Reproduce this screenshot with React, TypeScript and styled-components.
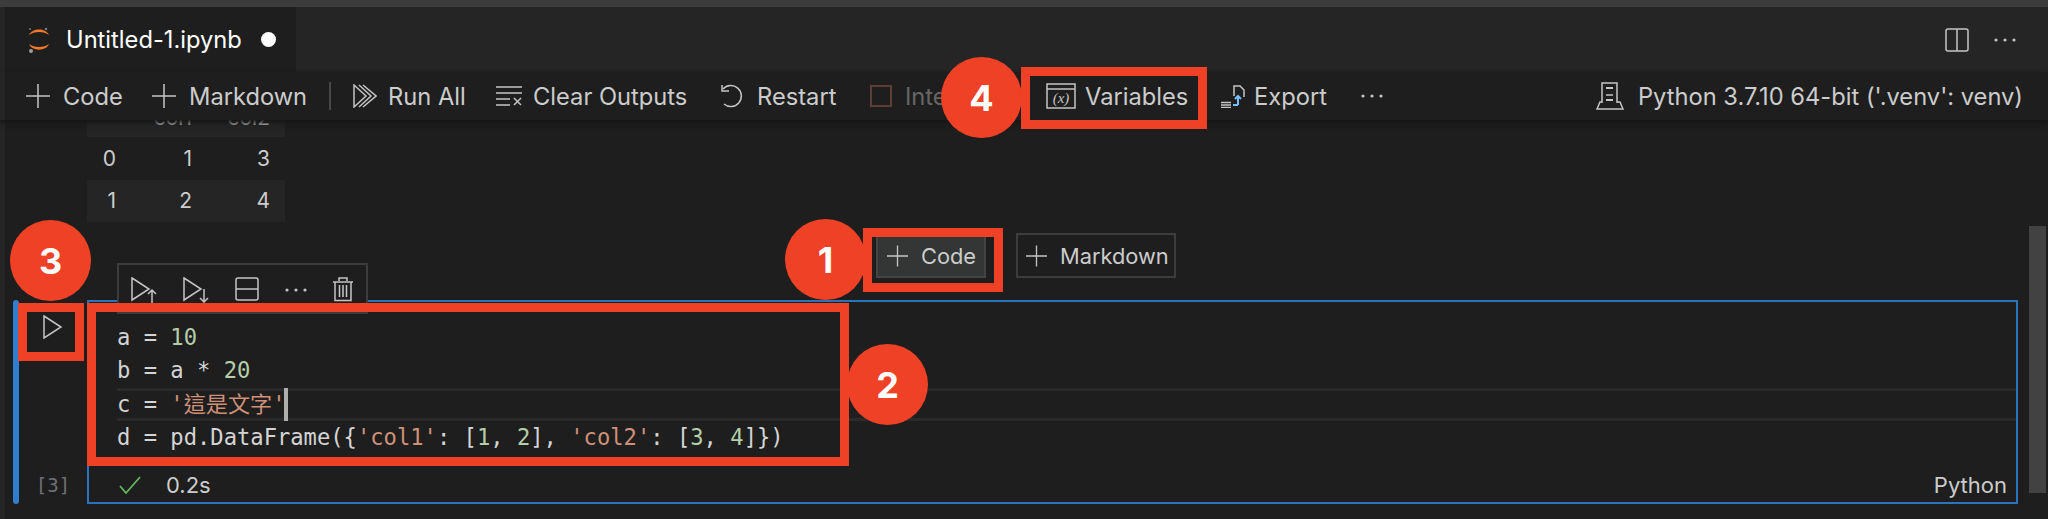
import styled, { createGlobalStyle } from "styled-components";

const GlobalStyle = createGlobalStyle`
  html, body {
    margin: 0;
    padding: 0;
    background: #1e1e1e;
  }
`;

const UI_FONT = `Inter, "Liberation Sans", sans-serif`;
const MONO_FONT = `"DejaVu Sans Mono", "Liberation Mono", "Noto Sans CJK TC", monospace`;

function Icon({ w, h, children }: { w: number; h: number; children: React.ReactNode }) {
  return (
    <Svg width={w} height={h} viewBox={`0 0 ${w} ${h}`}>
      {children}
    </Svg>
  );
}

const PlusIcon = () => (
  <Icon w={24} h={26}>
    <path d="M12 1v24M0 13h24" />
  </Icon>
);

const RunAllIcon = () => (
  <Icon w={24} h={24}>
    <path d="M1 1l12 11L1 23z" />
    <path d="M6 1l12 11L6 23M10 1l13 11-13 11" />
  </Icon>
);

const ClearIcon = () => (
  <Icon w={26} h={20}>
    <path d="M0 1h26M0 7h26M0 13h14M0 19h14" />
    <path d="M18 12l7 7M25 12l-7 7" />
  </Icon>
);

const RestartIcon = () => (
  <Icon w={25} h={24}>
    <path d="M5 20a10.5 10.5 0 1 0 -1-15" />
    <path d="M3 1v6h7" />
  </Icon>
);

const VariablesIcon = () => (
  <Icon w={30} h={26}>
    <rect x="1" y="1" width="28" height="24" />
    <path d="M1 6h28" />
    <VarText x="15" y="20">
      (x)
    </VarText>
  </Icon>
);

const ExportIcon = () => (
  <Icon w={24} h={23}>
    <path d="M0 17.500h10M0 20h10M0 22.500h10" />
    <path d="M13 11V1h6l4 4v7" />
    <BluePath d="M17 20v-9M14 14l3-3 3 3M12 20h5" />
  </Icon>
);

const KernelIcon = () => (
  <Icon w={28} h={28}>
    <path d="M6 21V1h15v20" />
    <path d="M10 6h7M10 18h7" strokeWidth="2" />
    <path d="M10 13h7" />
    <path d="M6 20H4l-3 7h26l-3-7h-3M1 27h26" />
  </Icon>
);

const SplitIcon = () => (
  <Icon w={24} h={24}>
    <rect x="1" y="1" width="22" height="22" rx="2" />
    <path d="M12 1v22" />
  </Icon>
);

const DotsIcon = () => (
  <Icon w={24} h={6}>
    <Dot cx="3" cy="3" r="1.6" />
    <Dot cx="12" cy="3" r="1.6" />
    <Dot cx="21" cy="3" r="1.6" />
  </Icon>
);

const RunUpIcon = () => (
  <Icon w={27} h={26}>
    <path d="M1 1l17 11L1 23z" />
    <path d="M21 26V13M17 17l4-4 4 4" />
  </Icon>
);

const RunDownIcon = () => (
  <Icon w={27} h={26}>
    <path d="M1 1l17 11L1 23z" />
    <path d="M21 12v13M17 21l4 4 4-4" />
  </Icon>
);

const SplitCellIcon = () => (
  <Icon w={24} h={24}>
    <rect x="1" y="1" width="22" height="22" rx="2" />
    <path d="M1 12h22" />
  </Icon>
);

const TrashIcon = () => (
  <Icon w={20} h={25}>
    <path d="M0 5h20M6 4V1h8v3" />
    <path d="M2 5v18.500h16V5" />
    <path d="M6.500 8v12M10 8v12M13.500 8v12" />
  </Icon>
);

const RunIcon = () => (
  <Icon w={20} h={24}>
    <path d="M1 1l17 11L1 23z" />
  </Icon>
);

const CheckIcon = () => (
  <Icon w={22} h={18}>
    <GreenPath d="M1 10l6 7L21 1" />
  </Icon>
);

const JupyterIcon = () => (
  <JupyterSvg width={24} height={26} viewBox="0 0 24 26">
    <path d="M1 8C4 .5 18 .5 21 8 16 4 6 4 1 8z" fill="#f37726" />
    <path d="M1 17C6 21 16 21 21 17 18 24.500 4 24.500 1 17z" fill="#f37726" />
    <circle cx="18" cy="2" r="1.300" fill="#767677" />
    <circle cx="2" cy="2" r="1" fill="#767677" />
    <circle cx="3" cy="24" r="2" fill="#9e9e9e" />
  </JupyterSvg>
);

const DATAFRAME_PIECES = [
  ["d = pd.DataFrame({", ""],
  ["'col1'", "str"],
  [": [", ""],
  ["1", "num"],
  [", ", ""],
  ["2", "num"],
  ["], ", ""],
  ["'col2'", "str"],
  [": [", ""],
  ["3", "num"],
  [", ", ""],
  ["4", "num"],
  ["]})", ""],
];

export default function App() {
  return (
    <Page>
      <GlobalStyle />
      <TopStrip />
      <TabBar>
        <Tab>
          <JupyterIcon />
          <TabName>Untitled-1.ipynb</TabName>
          <DirtyDot />
        </Tab>
        <TabActions>
          <SplitIcon />
          <DotsIcon />
        </TabActions>
      </TabBar>
      <Toolbar>
        <ToolItem $w={96}>
          <PlusIcon />
          Code
        </ToolItem>
        <ToolItem $w={153}>
          <PlusIcon />
          Markdown
        </ToolItem>
        <ToolDivider />
        <ToolItem $w={113} $gap={11}>
          <RunAllIcon />
          Run All
        </ToolItem>
        <ToolItem $w={193} $gap={11}>
          <ClearIcon />
          Clear Outputs
        </ToolItem>
        <ToolItem $w={121}>
          <RestartIcon />
          Restart
        </ToolItem>
        <ToolItem $w={146} $dim>
          <StopBox />
          Interrupt
        </ToolItem>
        <ToolItem $w={145} $gap={9}>
          <VariablesIcon />
          Variables
        </ToolItem>
        <ToolItem $w={109} $gap={9}>
          <ExportIcon />
          Export
        </ToolItem>
        <DotsIcon />
        <KernelPicker>
          <KernelIcon />
          Python 3.7.10 64-bit ('.venv': venv)
        </KernelPicker>
      </Toolbar>
      <Content>
        <OutputTable>
          <HeadCell />
          <HeadCell>col1</HeadCell>
          <HeadCell>col2</HeadCell>
          <BodyCell>0</BodyCell>
          <BodyCell>1</BodyCell>
          <BodyCell>3</BodyCell>
          <BodyCell $stripe>1</BodyCell>
          <BodyCell $stripe>2</BodyCell>
          <BodyCell $stripe>4</BodyCell>
        </OutputTable>
        <InsertRow>
          <InsertButton $active $w={110}>
            <PlusSmall>
              <PlusIcon />
            </PlusSmall>
            Code
          </InsertButton>
          <InsertButton $w={160}>
            <PlusSmall>
              <PlusIcon />
            </PlusSmall>
            Markdown
          </InsertButton>
        </InsertRow>
        <Cell>
          <FocusBar />
          <Gutter>
            <RunIcon />
            <ExecCount>[3]</ExecCount>
          </Gutter>
          <Editor>
            <CellToolbar>
              <RunUpIcon />
              <RunDownIcon />
              <SplitCellIcon />
              <DotsIcon />
              <TrashIcon />
            </CellToolbar>
            <Code>
              <Line>
                a = <Num>10</Num>
              </Line>
              <Line>
                b = a * <Num>20</Num>
              </Line>
              <Line $current>
                c = <Str>'這是文字'</Str>
                <Caret />
              </Line>
              <Line>
                {DATAFRAME_PIECES.map(([text, kind], i) =>
                  kind === "str" ? (
                    <Str key={i}>{text}</Str>
                  ) : kind === "num" ? (
                    <Num key={i}>{text}</Num>
                  ) : (
                    <span key={i}>{text}</span>
                  )
                )}
              </Line>
            </Code>
            <CellStatus>
              <CheckIcon />
              <Duration>0.2s</Duration>
              <Language>Python</Language>
            </CellStatus>
          </Editor>
        </Cell>
        <ScrollThumb />
      </Content>

      <RedBox $x={863} $y={228} $w={140} $h={64} />
      <RedBox $x={87} $y={303} $w={762} $h={163} />
      <RedBox $x={18} $y={303} $w={66} $h={58} />
      <RedBox $x={1021} $y={67} $w={186} $h={62} />
      <Badge $x={785} $y={219}>1</Badge>
      <Badge $x={847} $y={344}>2</Badge>
      <Badge $x={10} $y={220}>3</Badge>
      <Badge $x={941} $y={57}>4</Badge>
    </Page>
  );
}

const Page = styled.div`
  position: relative;
  width: 2048px;
  height: 519px;
  overflow: hidden;
  display: flex;
  flex-direction: column;
  background: #1e1e1e;
  color: #cccccc;
  font-family: ${UI_FONT};
`;

const Svg = styled.svg`
  flex: none;
  fill: none;
  stroke: #c5c5c5;
  stroke-width: 1.5;
`;

const VarText = styled.text`
  font-family: "Liberation Serif", serif;
  font-style: italic;
  font-size: 15px;
  text-anchor: middle;
  fill: #c5c5c5;
  stroke: none;
`;

const BluePath = styled.path`
  stroke: #75beff;
  stroke-width: 2;
`;

const GreenPath = styled.path`
  stroke: #5fb760;
  stroke-width: 1.8;
`;

const Dot = styled.circle`
  fill: #c5c5c5;
  stroke: none;
`;

const JupyterSvg = styled.svg`
  flex: none;
`;

const TopStrip = styled.div`
  height: 7px;
  flex: none;
  background: #3c3c3c;
`;

const TabBar = styled.div`
  height: 65px;
  flex: none;
  display: flex;
  justify-content: space-between;
  align-items: stretch;
  background: #252526;
  border-left: 5px solid #252526;
`;

const Tab = styled.div`
  width: 291px;
  display: flex;
  align-items: center;
  padding-left: 23px;
  box-sizing: border-box;
  background: #1e1e1e;
`;

const TabName = styled.span`
  margin-left: 14px;
  font-size: 23.700px;
  color: #ffffff;
`;

const DirtyDot = styled.span`
  width: 15px;
  height: 15px;
  margin-left: 19px;
  border-radius: 50%;
  background: #ffffff;
`;

const TabActions = styled.div`
  display: flex;
  align-items: center;
  gap: 24px;
  padding-right: 31px;
`;

const Toolbar = styled.div`
  height: 48px;
  flex: none;
  z-index: 2;
  display: flex;
  align-items: center;
  gap: 30px;
  padding: 0 25px 0 21px;
  background: #1e1e1e;
  border-left: 5px solid #252526;
  box-shadow: 0 3px 5px #151515;
  font-size: 23.700px;
`;

const ToolItem = styled.div<{ $w: number; $gap?: number; $dim?: boolean }>`
  width: ${(p) => p.$w}px;
  flex: none;
  display: flex;
  align-items: center;
  gap: ${(p) => p.$gap ?? 13}px;
  white-space: nowrap;
  color: ${(p) => (p.$dim ? "#666666" : "#cccccc")};
`;

const ToolDivider = styled.div`
  width: 2px;
  height: 28px;
  margin: 0 -8px 0 -6px;
  background: #484848;
`;

const StopBox = styled.span`
  width: 22px;
  height: 22px;
  flex: none;
  box-sizing: border-box;
  border: 2px solid #5e3d35;
`;

const KernelPicker = styled.div`
  margin-left: auto;
  display: flex;
  align-items: center;
  gap: 14px;
  white-space: nowrap;
`;

const Content = styled.div`
  position: relative;
  flex: 1;
  overflow: hidden;
  border-left: 5px solid #252526;
`;

const OutputTable = styled.div`
  width: 198px;
  margin: -26px 0 0 82px;
  display: grid;
  grid-template-columns: 44px 76px 78px;
  font-size: 21px;
`;

const HeadCell = styled.div`
  height: 43px;
  box-sizing: border-box;
  padding: 4px 15px 0 0;
  display: flex;
  align-items: center;
  justify-content: flex-end;
  background: #252526;
  color: #b5b5b5;
`;

const BodyCell = styled.div<{ $stripe?: boolean }>`
  height: 42.500px;
  padding-right: 15px;
  display: flex;
  align-items: center;
  justify-content: flex-end;
  background: ${(p) => (p.$stripe ? "#252526" : "transparent")};
`;

const InsertRow = styled.div`
  display: flex;
  gap: 30px;
  margin: 11px 0 0 871px;
`;

const InsertButton = styled.div<{ $w: number; $active?: boolean }>`
  width: ${(p) => p.$w}px;
  height: 45px;
  box-sizing: border-box;
  display: flex;
  align-items: center;
  gap: 13px;
  padding-left: ${(p) => (p.$active ? 9 : 8)}px;
  font-size: 21.800px;
  white-space: nowrap;
  background: ${(p) => (p.$active ? "#333635" : "transparent")};
  border: 2px solid ${(p) => (p.$active ? "#444444" : "#3c3c3c")};
`;

const PlusSmall = styled.span`
  display: flex;
  width: 21px;

  svg {
    width: 21px;
    height: 24px;
  }
`;

const Cell = styled.div`
  display: flex;
  height: 204px;
  margin: 22px 0 0 8px;
`;

const FocusBar = styled.div`
  width: 6px;
  flex: none;
  border-radius: 3px;
  background: #2f7ed0;
`;

const Gutter = styled.div`
  width: 68px;
  flex: none;
  display: flex;
  flex-direction: column;
  justify-content: space-between;
  align-items: center;
  padding: 15px 0 8px;
  box-sizing: border-box;
`;

const ExecCount = styled.span`
  font-family: ${MONO_FONT};
  font-size: 19px;
  color: #6e7074;
`;

const Editor = styled.div`
  position: relative;
  width: 1931px;
  flex: none;
  box-sizing: border-box;
  display: flex;
  flex-direction: column;
  border: 2px solid #2a74bd;
`;

const CellToolbar = styled.div`
  position: absolute;
  left: 28px;
  top: -39px;
  width: 251px;
  height: 51px;
  box-sizing: border-box;
  display: flex;
  align-items: flex-start;
  gap: 25px;
  padding: 12px 0 0 12px;
  background: #1e1e1e;
  border: 2px solid #3c3c3c;

  > svg:nth-child(4) {
    margin-top: 10px;
  }
`;

const Code = styled.div`
  padding-top: 19px;
  font-family: ${MONO_FONT};
  font-size: 22.150px;
  line-height: 33.300px;
  color: #d4d4d4;
  white-space: pre;
`;

const Line = styled.div<{ $current?: boolean }>`
  height: 33.300px;
  box-sizing: border-box;
  margin-left: 28px;
  ${(p) =>
    p.$current &&
    `
    border-top: 3px solid #2a2a2a;
    border-bottom: 3px solid #2a2a2a;
    line-height: 27.300px;
  `}
`;

const Num = styled.span`
  color: #b5cea8;
`;

const Str = styled.span`
  color: #ce9178;
`;

const Caret = styled.span`
  display: inline-block;
  width: 4px;
  height: 33px;
  margin: -3px 0 0 -2px;
  vertical-align: top;
  background: #aeafad;
`;

const CellStatus = styled.div`
  margin-top: auto;
  height: 34px;
  display: flex;
  align-items: center;
  padding: 0 9px 0 30px;
  font-size: 22px;
`;

const Duration = styled.span`
  margin-left: 25px;
`;

const Language = styled.span`
  margin-left: auto;
`;

const ScrollThumb = styled.div`
  position: absolute;
  right: 2px;
  top: 106px;
  width: 17px;
  height: 267px;
  background: #424242;
`;

const RedBox = styled.div<{ $x: number; $y: number; $w: number; $h: number }>`
  position: absolute;
  left: ${(p) => p.$x}px;
  top: ${(p) => p.$y}px;
  width: ${(p) => p.$w}px;
  height: ${(p) => p.$h}px;
  box-sizing: border-box;
  border: 9px solid #ee4125;
  z-index: 5;
`;

const Badge = styled.div<{ $x: number; $y: number }>`
  position: absolute;
  left: ${(p) => p.$x}px;
  top: ${(p) => p.$y}px;
  width: 81px;
  height: 81px;
  display: flex;
  align-items: center;
  justify-content: center;
  border-radius: 50%;
  background: #ee4125;
  color: #ffffff;
  font-size: 36px;
  font-weight: 700;
  z-index: 6;
`;
